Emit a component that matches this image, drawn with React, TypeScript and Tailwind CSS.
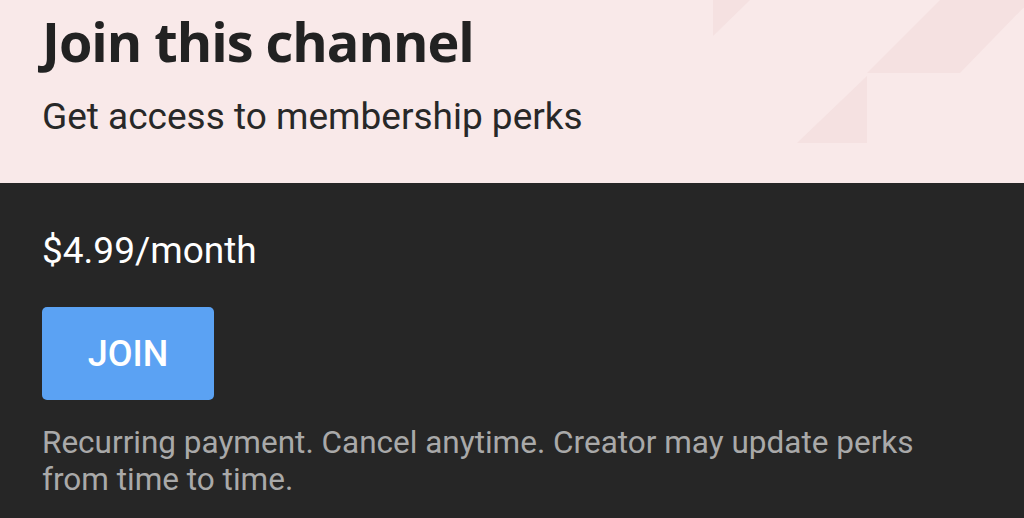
import React from 'react';

const HeaderShapes: React.FC = () => (
  <svg className="absolute inset-0 h-full w-full" viewBox="0 0 1024 183" preserveAspectRatio="none">
    <polygon points="713,0 750,0 713,36" fill="#f5e1e1" />
    <polygon points="940,0 1031,0 960,73 867,73" fill="#f5e1e1" />
    <polygon points="867,76 867,143 797,143" fill="#f5e1e1" />
  </svg>
);

const App: React.FC = () => {
  return (
    <div className="w-[1024px] h-[518px] overflow-hidden bg-[#262626]" style={{ fontFamily: 'Roboto, sans-serif' }}>
      {/* Header */}
      <div className="relative h-[183px] bg-[#f9e9e9] overflow-hidden">
        <HeaderShapes />
        <div className="relative pl-[42px] pt-[11px]">
          <h1 className="text-[54px] leading-[60px] font-bold text-[#222] tracking-[-1px]" style={{ fontFamily: '"Open Sans", sans-serif' }}>
            Join this channel
          </h1>
          <p className="mt-[24px] text-[37px] leading-[44px] text-[#282828]">
            Get access to membership perks
          </p>
        </div>
      </div>

      {/* Body */}
      <div className="px-[42px] pt-[46px]">
        <div className="text-[37px] leading-[44px] text-white">$4.99/month</div>
        <button className="mt-[34px] flex h-[93px] w-[172px] items-center justify-center rounded-[5px] bg-[#5ba2f3] text-[36px] font-medium text-white">
          JOIN
        </button>
        <p className="mt-[24px] w-[930px] text-[31.5px] leading-[37px] text-[#a9a9a9]">
          Recurring payment. Cancel anytime. Creator may update perks from time to time.
        </p>
      </div>
    </div>
  );
};

export default App;
